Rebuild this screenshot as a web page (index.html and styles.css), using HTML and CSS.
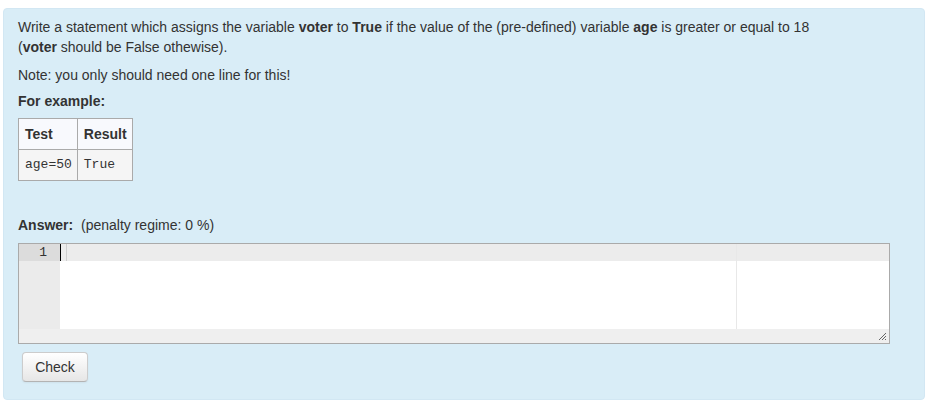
FILE: index.html
```html
<!DOCTYPE html>
<html>
<head>
<meta charset="utf-8">
<link rel="stylesheet" href="styles.css">
</head>
<body>
<div class="formulation">
  <div class="qtext">
    <p class="p1">Write a statement which assigns the variable <b>voter</b> to <b>True</b> if the value of the (pre-defined) variable <b>age</b> is greater or equal to 18<br>(<b>voter</b> should be False othewise).</p>
    <p class="p2">Note: you only should need one line for this!</p>
    <div class="forexample">For example:</div>
    <table class="examples">
      <tr><th>Test</th><th>Result</th></tr>
      <tr><td>age=50</td><td>True</td></tr>
    </table>
  </div>
  <div class="answer-label"><b>Answer:</b>&nbsp; (penalty regime: 0 %)</div>
  <div class="editor">
    <div class="editor-main">
      <div class="gutter">
        <div class="gutter-active">1</div>
      </div>
      <div class="content">
        <div class="active-line"><span class="cursor"></span><span class="guide"></span></div>
        <div class="print-margin"></div>
      </div>
    </div>
    <div class="editor-foot">
      <svg class="grip" width="9" height="9" viewBox="0 0 9 9"><path d="M1 8 L8 1 M4 8 L8 4 M7 8 L8 7" stroke="#666" stroke-width="1" fill="none"/></svg>
    </div>
  </div>
  <div class="actions"><button class="check">Check</button></div>
</div>
</body>
</html>
```
FILE: styles.css
```css
html, body {
  margin: 0;
  padding: 0;
  background: #fff;
}
body {
  padding: 8px 13px 0 3px;
  font-family: "Liberation Sans", Arial, Helvetica, sans-serif;
  font-size: 14px;
  line-height: 20px;
  color: #333;
}
.formulation {
  background: #d9edf7;
  border: 1px solid #d2e7f3;
  border-radius: 4px;
  padding: 8px 14px 18px 14px;
  height: 364px;
}
.qtext p {
  margin: 0;
}
.p1 { margin-bottom: 8px !important; }
.p2 { margin-bottom: 6px !important; }
.forexample {
  font-weight: bold;
  margin-bottom: 7px;
}
.examples {
  border-collapse: collapse;
  margin-bottom: 34px;
}
.examples th, .examples td {
  border: 1px solid #aaa;
  padding: 0 5px 0 6px;
  height: 30px;
  text-align: left;
  vertical-align: middle;
}
.examples th {
  background: #f8f9fd;
  font-weight: bold;
}
.examples td {
  background: #f5f5f5;
  font-family: "Liberation Mono", "DejaVu Sans Mono", monospace;
  font-size: 13px;
}
.answer-label {
  margin-bottom: 8px;
}
.editor {
  width: 870px;
  border: 1px solid #aaa;
  background: #fff;
}
.editor-main {
  display: flex;
  height: 85px;
}
.gutter {
  width: 41px;
  background: #ebebeb;
  font-family: "Liberation Mono", "DejaVu Sans Mono", monospace;
  font-size: 13px;
  color: #333;
}
.gutter-active {
  height: 17px;
  line-height: 17px;
  background: #dcdcdc;
  text-align: right;
  padding-right: 13px;
}
.content {
  flex: 1;
  position: relative;
}
.active-line {
  height: 17px;
  background: #ececec;
  display: flex;
}
.cursor {
  width: 1px;
  height: 17px;
  background: #000;
}
.guide {
  width: 1px;
  height: 17px;
  margin-left: 5px;
  background: #cfcfcf;
}
.print-margin {
  position: absolute;
  top: 0;
  bottom: 0;
  left: 676px;
  width: 1px;
  background: #e8e8e8;
}
.editor-foot {
  height: 14px;
  background: #efefef;
  display: flex;
  justify-content: flex-end;
  align-items: flex-end;
}
.grip {
  margin: 0 2px 2px 0;
}
.actions {
  margin-top: 8px;
  padding-left: 4px;
}
.check {
  font-family: "Liberation Sans", Arial, Helvetica, sans-serif;
  font-size: 14px;
  color: #333;
  height: 30px;
  width: 66px;
  padding: 0;
  border: 1px solid #ccc;
  border-bottom-color: #b3b3b3;
  border-radius: 4px;
  background: linear-gradient(#ffffff, #e6e6e6);
  box-shadow: inset 0 1px 0 rgba(255,255,255,.2), 0 1px 2px rgba(0,0,0,.05);
}
```
